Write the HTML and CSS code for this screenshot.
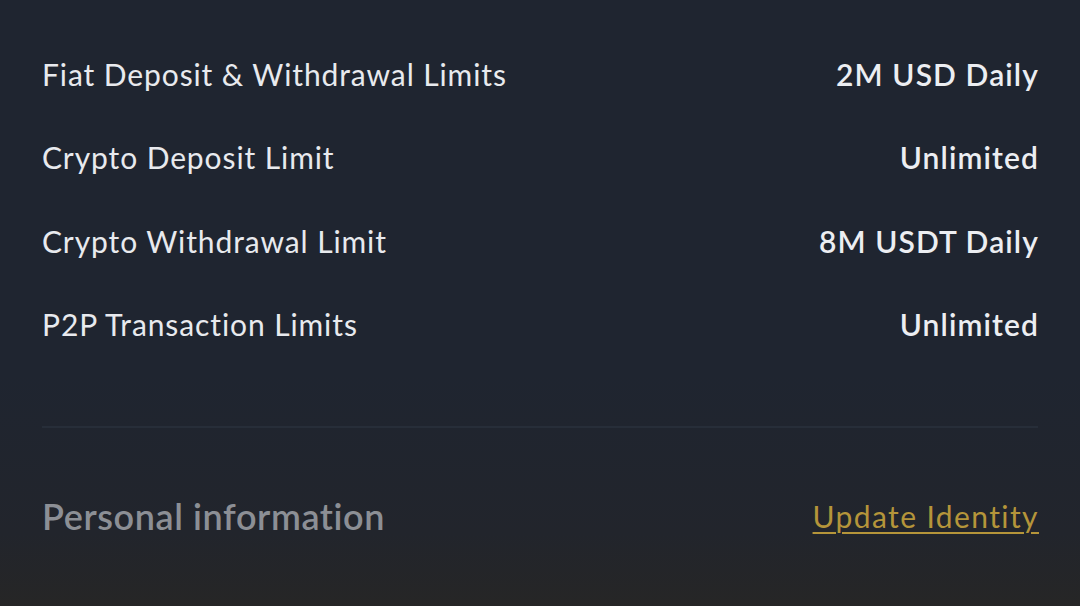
FILE: index.html
```html
<!DOCTYPE html>
<html>
<head>
<meta charset="utf-8">
<link rel="stylesheet" href="styles.css">
</head>
<body>
<div class="page">
  <div class="limits">
    <div class="row"><span class="label">Fiat Deposit &amp; Withdrawal Limits</span><span class="value">2M USD Daily</span></div>
    <div class="row"><span class="label">Crypto Deposit Limit</span><span class="value">Unlimited</span></div>
    <div class="row"><span class="label">Crypto Withdrawal Limit</span><span class="value">8M USDT Daily</span></div>
    <div class="row"><span class="label">P2P Transaction Limits</span><span class="value">Unlimited</span></div>
  </div>
  <div class="divider"></div>
  <div class="section">
    <span class="section-title">Personal information</span>
    <a class="link">Update Identity</a>
  </div>
</div>
</body>
</html>
```
FILE: styles.css
```css
html, body { margin: 0; padding: 0; }
body {
  width: 1080px;
  height: 606px;
  overflow: hidden;
  background: linear-gradient(180deg, #1f2530 0%, #1f2530 62%, #22252c 88%, #262626 100%);
  font-family: Lato, "Noto Sans", sans-serif;
  font-variant-ligatures: none;
}
.page { padding: 0 42px; }
.limits { padding-top: 32px; display: flex; flex-direction: column; }
.row {
  display: flex; justify-content: space-between; align-items: center;
  height: 83.5px;
}
.label { font-size: 30px; color: #e8eaee; font-weight: 400; letter-spacing: 0.9px; }
.value { font-size: 30px; color: #eceef2; font-weight: 600; letter-spacing: 1.1px; margin-right: -1px; }
.divider { margin-top: 60px; height: 2px; background: #272e39; }
.section {
  display: flex; justify-content: space-between; align-items: center;
  height: 176px;
}
.section-title { font-size: 36px; color: #8c8f95; font-weight: 600; letter-spacing: 0.6px; }
.link { font-size: 30px; color: #b5953a; text-decoration: underline; text-underline-offset: 4px; text-decoration-thickness: 2px; font-weight: 400; letter-spacing: 1.4px; margin-right: -1px; }
```
